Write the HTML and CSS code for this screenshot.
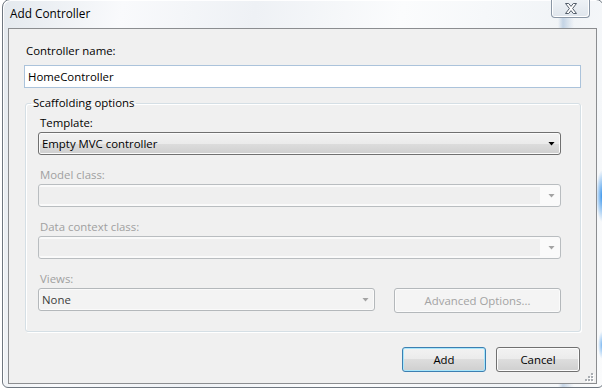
FILE: index.html
```html
<!DOCTYPE html>
<html lang="en">
<head>
  <meta charset="UTF-8">
  <meta name="viewport" content="width=device-width, initial-scale=1">
  <title>Add Controller</title>
  <link rel="stylesheet" href="styles.css">
</head>
<body>
  <div class="window">
    <div class="titlebar">
      <span class="title">Add Controller</span>
      <button class="close" title="Close">
        <svg width="14" height="11" viewBox="0 0 14 11">
          <path d="M1.5 0.5h3.2l2.3 2.9 2.3-2.9h3.2l-3.9 5 3.9 5h-3.2l-2.3-2.9-2.3 2.9h-3.2l3.9-5z" fill="#fff" stroke="#535d6a" stroke-width="1" stroke-linejoin="round"/>
        </svg>
      </button>
    </div>

    <div class="client">
      <label class="field-label" for="controller-name">Controller name:</label>
      <input type="text" id="controller-name" class="textbox" value="HomeController">

      <fieldset class="group">
        <legend>Scaffolding options</legend>

        <div class="field">
          <label class="field-label">Template:</label>
          <div class="combo">
            <span class="combo-text">Empty MVC controller</span>
            <span class="arrow"></span>
          </div>
        </div>

        <div class="field">
          <label class="field-label disabled">Model class:</label>
          <div class="combo disabled">
            <span class="combo-field"></span>
            <span class="arrow"></span>
          </div>
        </div>

        <div class="field">
          <label class="field-label disabled">Data context class:</label>
          <div class="combo disabled">
            <span class="combo-field"></span>
            <span class="arrow"></span>
          </div>
        </div>

        <div class="field">
          <label class="field-label disabled">Views:</label>
          <div class="views-row">
            <div class="combo flat">
              <span class="combo-text">None</span>
              <span class="arrow"></span>
            </div>
            <button class="btn flat" disabled>Advanced Options...</button>
          </div>
        </div>
      </fieldset>

      <div class="buttons">
        <button class="btn default">Add</button>
        <button class="btn">Cancel</button>
      </div>

      <svg class="grip" width="10" height="10" viewBox="0 0 10 10">
        <g fill="#fff">
          <rect x="8" y="2" width="2" height="2"/>
          <rect x="5" y="5" width="2" height="2"/>
          <rect x="8" y="5" width="2" height="2"/>
          <rect x="2" y="8" width="2" height="2"/>
          <rect x="5" y="8" width="2" height="2"/>
          <rect x="8" y="8" width="2" height="2"/>
        </g>
        <g fill="#a9adb2">
          <rect x="7" y="1" width="2" height="2"/>
          <rect x="4" y="4" width="2" height="2"/>
          <rect x="7" y="4" width="2" height="2"/>
          <rect x="1" y="7" width="2" height="2"/>
          <rect x="4" y="7" width="2" height="2"/>
          <rect x="7" y="7" width="2" height="2"/>
        </g>
      </svg>
    </div>
  </div>
</body>
</html>
```

FILE: styles.css
```css
*, *::before, *::after {
  box-sizing: border-box;
}

html, body {
  margin: 0;
  padding: 0;
  overflow: hidden;
  background-color: #fff;
}

body {
  font-family: "Open Sans", "Noto Sans", sans-serif;
  font-size: 11.4px;
  color: #000;
}

/* window frame (aero glass) */
.window {
  position: relative;
  width: 602px;
  height: 389px;
  margin: -1px 0 0 2px;
  border: 1px solid #6f7780;
  border-radius: 8px 8px 6px 6px;
  background:
    radial-gradient(6px 26px at 599px 196px, rgba(40,140,235,0.9), rgba(40,140,235,0)),
    radial-gradient(4px 14px at 599px 345px, rgba(40,140,235,0.6), rgba(40,140,235,0)),
    linear-gradient(90deg, rgba(0,0,0,0) 555px, rgba(110,150,195,0.35) 560px, rgba(110,150,195,0.15) 566px, rgba(0,0,0,0) 571px),
    linear-gradient(100deg, #e4e9ee 0%, #f9fafc 18%, #eef1f5 38%, #fbfcfd 60%, #f1f4f7 85%, #fafbfc 100%);
  box-shadow: inset 1px 1px 0 rgba(255,255,255,0.9);
}

.titlebar {
  display: flex;
  height: 28px;
}

.title {
  padding: 5px 0 0 7px;
  line-height: 16px;
  font-size: 11.8px;
}

.close {
  display: flex;
  align-items: center;
  justify-content: center;
  width: 39px;
  height: 18px;
  margin: 0 13px 0 auto;
  padding: 0;
  border: 1px solid #8a96a5;
  border-top: none;
  border-radius: 0 0 4px 4px;
  background: linear-gradient(#eef2f6, #dfe5ec);
  box-shadow: inset 1px 0 0 #fff, inset -1px -1px 0 #fff;
}

.client {
  position: relative;
  width: 589px;
  height: 356px;
  margin-left: 5px;
  padding: 14px 15px 0;
  border: 1px solid #8b8d90;
  background-color: #f0f0f0;
}

.field-label {
  display: block;
  padding-left: 2px;
  line-height: 16px;
}

.field-label.disabled {
  color: #a0a0a0;
}

.textbox {
  display: block;
  width: 100%;
  height: 23px;
  margin: 6px 0 0;
  padding: 0 3px;
  border: 1px solid #abc3db;
  background-color: #fff;
  font: inherit;
  color: #000;
  outline: none;
}

/* group box */
.group {
  min-width: 0;
  margin: 7px 0 0 1px;
  padding: 4px 19px 18px 12px;
  border: 1px solid #d5dfe5;
  border-radius: 3px;
  box-shadow: inset 1px 1px 0 #fff, 1px 1px 0 #fff;
}

.group legend {
  margin-left: -7px;
  padding: 0 2px;
  line-height: 16px;
}

.field + .field {
  margin-top: 12px;
}

.field .field-label {
  margin-bottom: 1px;
}

.combo {
  display: flex;
  align-items: center;
  height: 23px;
  padding-left: 3px;
  border: 1px solid #707070;
  border-radius: 3px;
  background: linear-gradient(#f2f2f2 0%, #ebebeb 50%, #dddddd 50%, #cfcfcf 100%);
  box-shadow: inset 0 0 0 1px #fbfbfb;
}

.combo-text {
  flex-grow: 1;
}

.arrow {
  flex-shrink: 0;
  width: 7px;
  height: 4px;
  margin: 0 5px 0 8px;
  background-color: #000;
  clip-path: polygon(0 0, 100% 0, 50% 100%);
}

.combo.disabled {
  padding: 2px 0;
  border-color: #b9bdc0;
  background: #fafafa;
  box-shadow: none;
}

.combo-field {
  flex-grow: 1;
  align-self: stretch;
  background-color: #efefef;
}

.combo.disabled .arrow,
.combo.flat .arrow {
  background-color: #a3a3a3;
}

.combo.flat {
  flex: 0 0 337px;
  border-color: #b4b8bb;
  background: #f3f3f3;
  box-shadow: inset 0 0 0 1px #fafafa;
  color: #3c3c3c;
}

.views-row {
  display: flex;
  align-items: flex-start;
  gap: 19px;
}

/* buttons */
.btn {
  width: 84px;
  height: 25px;
  padding: 0;
  border: 1px solid #707070;
  border-radius: 3px;
  background: linear-gradient(#f2f2f2 0%, #ebebeb 50%, #dddddd 50%, #cfcfcf 100%);
  box-shadow: inset 0 0 0 1px #fcfcfc;
  font: inherit;
  color: #000;
}

.btn.default {
  border-color: #3c7fb1;
  box-shadow: inset 0 0 0 1px #a8e6fb;
}

.btn.flat {
  flex-grow: 1;
  border-color: #b4b8bb;
  background: #f4f4f4;
  box-shadow: inset 0 0 0 1px #fbfbfb;
  color: #a3a3a3;
}

.buttons {
  display: flex;
  justify-content: flex-end;
  gap: 10px;
  margin-top: 15px;
  padding-right: 1px;
}

.grip {
  position: absolute;
  right: 2px;
  bottom: 1px;
}
```
